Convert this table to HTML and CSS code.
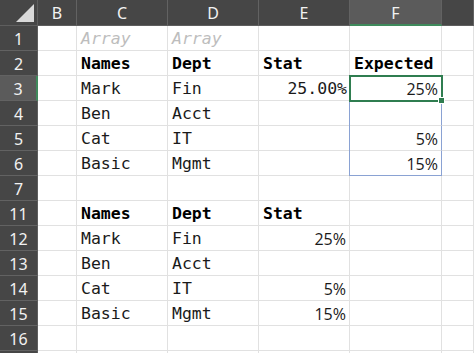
FILE: index.html
```html
<!DOCTYPE html>
<html lang="en">
<head>
    <meta charset="UTF-8">
    <meta name="viewport" content="width=device-width, initial-scale=1.0">
    <title>Sheet1</title>
    <link rel="stylesheet" href="styles.css">
</head>
<body>
    <div class="sheet">
        <!-- column headers -->
        <div class="corner"><span class="corner-tri"></span></div>
        <div class="col-head">B</div>
        <div class="col-head">C</div>
        <div class="col-head">D</div>
        <div class="col-head">E</div>
        <div class="col-head selected">F</div>
        <div class="col-head"></div>

        <div class="row-head">1</div>
        <div class="cell"></div>
        <div class="cell ghost">Array</div>
        <div class="cell ghost">Array</div>
        <div class="cell"></div>
        <div class="cell"></div>
        <div class="cell"></div>

        <div class="row-head">2</div>
        <div class="cell"></div>
        <div class="cell bold">Names</div>
        <div class="cell bold">Dept</div>
        <div class="cell bold">Stat</div>
        <div class="cell bold">Expected</div>
        <div class="cell"></div>

        <div class="row-head selected">3</div>
        <div class="cell"></div>
        <div class="cell">Mark</div>
        <div class="cell">Fin</div>
        <div class="cell num">25.00%</div>
        <div class="cell num pct active">25%</div>
        <div class="cell"></div>

        <div class="row-head">4</div>
        <div class="cell"></div>
        <div class="cell">Ben</div>
        <div class="cell">Acct</div>
        <div class="cell"></div>
        <div class="cell num pct spill"></div>
        <div class="cell"></div>

        <div class="row-head">5</div>
        <div class="cell"></div>
        <div class="cell">Cat</div>
        <div class="cell">IT</div>
        <div class="cell"></div>
        <div class="cell num pct spill">5%</div>
        <div class="cell"></div>

        <div class="row-head">6</div>
        <div class="cell"></div>
        <div class="cell">Basic</div>
        <div class="cell">Mgmt</div>
        <div class="cell"></div>
        <div class="cell num pct spill spill-end">15%</div>
        <div class="cell"></div>

        <div class="row-head">7</div>
        <div class="cell"></div>
        <div class="cell"></div>
        <div class="cell"></div>
        <div class="cell"></div>
        <div class="cell"></div>
        <div class="cell"></div>

        <div class="row-head">11</div>
        <div class="cell"></div>
        <div class="cell bold">Names</div>
        <div class="cell bold">Dept</div>
        <div class="cell bold">Stat</div>
        <div class="cell"></div>
        <div class="cell"></div>

        <div class="row-head">12</div>
        <div class="cell"></div>
        <div class="cell">Mark</div>
        <div class="cell">Fin</div>
        <div class="cell num pct">25%</div>
        <div class="cell"></div>
        <div class="cell"></div>

        <div class="row-head">13</div>
        <div class="cell"></div>
        <div class="cell">Ben</div>
        <div class="cell">Acct</div>
        <div class="cell"></div>
        <div class="cell"></div>
        <div class="cell"></div>

        <div class="row-head">14</div>
        <div class="cell"></div>
        <div class="cell">Cat</div>
        <div class="cell">IT</div>
        <div class="cell num pct">5%</div>
        <div class="cell"></div>
        <div class="cell"></div>

        <div class="row-head">15</div>
        <div class="cell"></div>
        <div class="cell">Basic</div>
        <div class="cell">Mgmt</div>
        <div class="cell num pct">15%</div>
        <div class="cell"></div>
        <div class="cell"></div>

        <div class="row-head">16</div>
        <div class="cell"></div>
        <div class="cell"></div>
        <div class="cell"></div>
        <div class="cell"></div>
        <div class="cell"></div>
        <div class="cell"></div>

        <!-- next row, only its top edge shows -->
        <div class="row-head"></div>
        <div class="cell"></div>
        <div class="cell"></div>
        <div class="cell"></div>
        <div class="cell"></div>
        <div class="cell"></div>
        <div class="cell"></div>
    </div>
</body>
</html>
```

FILE: styles.css
```css
body {
    margin: 0;
    background-color: white;
    overflow: hidden;
}

.sheet {
    display: grid;
    grid-template-columns: 38px 39px 91px 91px 91px 92px 1fr;
    grid-auto-rows: 25px;
    grid-template-rows: 26px;
    width: 474px;
}

/* headers */
.corner,
.col-head,
.row-head {
    background-color: #464646;
    color: #f2f2f2;
    font-family: "Noto Sans", "Open Sans", sans-serif;
    font-size: 16px;
    display: flex;
    align-items: center;
    justify-content: center;
    box-sizing: border-box;
}

.corner {
    position: relative;
    border-right: 1px solid #5e5e5e;
    border-bottom: 1px solid #5e5e5e;
}

.corner-tri {
    position: absolute;
    right: 3px;
    bottom: 3px;
    width: 0;
    height: 0;
    border-left: 18px solid transparent;
    border-bottom: 18px solid #d9d9d9;
}

.col-head {
    border-right: 1px solid #626262;
    border-bottom: 1px solid #5e5e5e;
    padding-top: 1px;
}

.col-head.selected {
    background-color: #5b5b5b;
    border-bottom: 2px solid #3f8a5c;
}

.row-head {
    border-right: 1px solid #5e5e5e;
    border-bottom: 1px solid #626262;
    padding-top: 1px;
}

.row-head.selected {
    background-color: #5b5b5b;
    border-right: 2px solid #3f8a5c;
}

/* cells */
.cell {
    box-sizing: border-box;
    border-right: 1px solid #e1e1e1;
    border-bottom: 1px solid #e1e1e1;
    font-family: "DejaVu Sans Mono", "Liberation Mono", monospace;
    font-size: 16.5px;
    color: #1a1a1a;
    padding: 2px 3px 0 4px;
    line-height: 22px;
    white-space: nowrap;
    overflow: visible;
}

.bold {
    font-weight: bold;
    color: #000;
}

.ghost {
    font-style: italic;
    color: #bdbdbd;
}

.num {
    text-align: right;
    padding-right: 2px;
}

.pct {
    font-family: "Open Sans", "Noto Sans", sans-serif;
    font-size: 16px;
    padding-right: 3px;
}

/* spilled range F3:F6 */
.spill {
    border-right-color: #8aa2d3;
    box-shadow: -1px 0 0 #8aa2d3;
}

.spill-end {
    border-bottom-color: #8aa2d3;
}

/* active cell F3 */
.active {
    position: relative;
}

.active::after {
    content: "";
    position: absolute;
    top: -1px;
    left: -1px;
    right: -2px;
    bottom: -2px;
    border: 2px solid #2f7d50;
}

.active::before {
    content: "";
    position: absolute;
    right: -4px;
    bottom: -4px;
    width: 5px;
    height: 5px;
    background-color: #2f7d50;
    border: 1px solid white;
    z-index: 1;
}
```
